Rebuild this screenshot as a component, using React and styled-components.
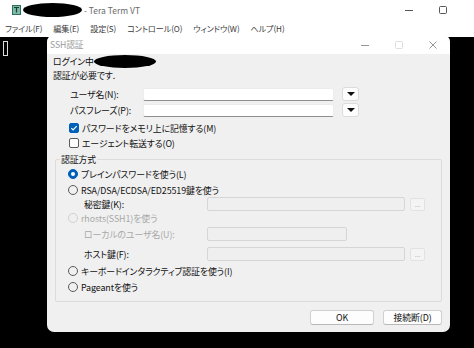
import React from 'react';
import styled, { createGlobalStyle } from 'styled-components';

const GlobalStyle = createGlobalStyle`
  html, body {
    margin: 0;
    padding: 0;
    background: #000;
  }
  body {
    font-family: "Noto Sans CJK JP", "Noto Sans", sans-serif;
    font-feature-settings: "palt";
  }
`;

// ---- main Tera Term window ----
const Window = styled.div`
  position: relative;
  width: 474px;
  height: 348px;
  overflow: hidden;
  display: flex;
  flex-direction: column;
  background: #000;
`;

const TitleBar = styled.div`
  height: 20px;
  background: #fff;
  display: flex;
  align-items: center;
  padding-left: 12px;
  font-size: 8.5px;
  color: #6a6a6a;
`;

const Redact = styled.span`
  display: inline-block;
  width: ${(p) => p.w}px;
  height: ${(p) => p.h}px;
  margin-left: ${(p) => p.ml || 0}px;
  background: #000;
  border-radius: 50%;
`;

const TitleText = styled.span`
  margin-left: 2px;
  white-space: nowrap;
`;

const WinControls = styled.div`
  margin-left: auto;
  display: flex;
  align-items: center;
  gap: 26px;
  padding-right: 27px;
  color: #333;
`;

const MenuBar = styled.div`
  height: 17px;
  background: #fff;
  display: flex;
  align-items: center;
  gap: 11px;
  padding-left: 5px;
  font-size: 8.1px;
  letter-spacing: -0.1px;
  color: #3a3a3a;
`;

const MenuItem = styled.span`
  white-space: nowrap;
`;

const Terminal = styled.div`
  flex: 1;
  background: #000;
  padding: 4px 0 0 3px;
`;

const Cursor = styled.div`
  width: 3px;
  height: 13px;
  border: 1px solid #ddd;
`;

// ---- SSH dialog ----
const Dialog = styled.div`
  position: absolute;
  left: 47px;
  top: 35px;
  width: 403px;
  height: 297px;
  border-radius: 7px;
  overflow: hidden;
  background: #f0f0f0;
  display: flex;
  flex-direction: column;
  font-size: 8.9px;
  letter-spacing: -0.1px;
  color: #111;
`;

const DlgTitle = styled.div`
  height: 19px;
  background: #fff;
  display: flex;
  align-items: center;
  padding-left: 3px;
  color: #9a9a9a;
  font-size: 8.7px;
`;

const DlgControls = styled.div`
  margin-left: auto;
  display: flex;
  align-items: center;
  gap: 26px;
  padding-right: 13px;
`;

const DlgBody = styled.div`
  flex: 1;
  display: flex;
  flex-direction: column;
  padding: 0 8px 7px 6px;
`;

const Line = styled.div`
  height: ${(p) => p.h || 14}px;
  margin-top: ${(p) => p.mt || 0}px;
  margin-left: ${(p) => p.ml || 0}px;
  display: flex;
  align-items: center;
  white-space: nowrap;
  color: ${(p) => (p.disabled ? '#a8a8a8' : 'inherit')};
`;

const Label = styled.span`
  width: ${(p) => p.w}px;
  flex: none;
`;

const Input = styled.div`
  width: ${(p) => p.w}px;
  height: ${(p) => p.h || 12}px;
  box-sizing: border-box;
  flex: none;
  border-radius: 2px;
  background: ${(p) => (p.disabled ? '#efefef' : '#fff')};
  border: 1px solid ${(p) => (p.disabled ? '#d6d6d6' : '#ececec')};
  border-bottom-color: ${(p) => (p.disabled ? '#d6d6d6' : '#8f8f8f')};
`;

const DropBtn = styled.div`
  width: 17px;
  height: 14px;
  margin-left: 8px;
  box-sizing: border-box;
  border: 1px solid #dcdcdc;
  border-radius: 3px;
  background: #fdfdfd;
  display: flex;
  align-items: center;
  justify-content: center;
`;

const Tri = styled.span`
  width: 0;
  height: 0;
  border-left: 4px solid transparent;
  border-right: 4px solid transparent;
  border-top: 4px solid #111;
`;

const DotsBtn = styled.div`
  width: 15px;
  height: 13px;
  margin-left: 5px;
  box-sizing: border-box;
  border: 1px solid #e2e2e2;
  border-radius: 2px;
  background: #f4f4f4;
  color: #b8b8b8;
  font-size: 7px;
  line-height: 10px;
  text-align: center;
`;

const Check = styled.span`
  width: 10px;
  height: 10px;
  box-sizing: border-box;
  border-radius: 2px;
  margin-right: 3px;
  flex: none;
  display: flex;
  align-items: center;
  justify-content: center;
  background: ${(p) => (p.on ? '#005fb8' : '#fff')};
  border: 1px solid ${(p) => (p.on ? '#005fb8' : '#5a5a5a')};
`;

const Radio = styled.span`
  width: 10px;
  height: 10px;
  box-sizing: border-box;
  border-radius: 50%;
  margin-right: 3px;
  flex: none;
  display: flex;
  align-items: center;
  justify-content: center;
  background: ${(p) => (p.on ? '#005fb8' : 'transparent')};
  border: 1px solid
    ${(p) => (p.on ? '#005fb8' : p.disabled ? '#d0d0d0' : '#5a5a5a')};

  &::after {
    content: '';
    display: ${(p) => (p.on ? 'block' : 'none')};
    width: 4px;
    height: 4px;
    border-radius: 50%;
    background: #fff;
  }
`;

const Group = styled.div`
  margin: 9px 0 0 2px;
  border: 1px solid #dcdcdc;
  border-radius: 2px;
  padding: 0 0 7px 0;
  display: flex;
  flex-direction: column;
`;

const Legend = styled.div`
  margin: -7px 0 0 4px;
  height: 13px;
  line-height: 13px;
  padding: 0 1px;
  width: fit-content;
  background: #f0f0f0;
`;

const Buttons = styled.div`
  margin-top: 8px;
  display: flex;
  justify-content: flex-end;
  gap: 9px;
`;

const Button = styled.div`
  width: ${(p) => p.w}px;
  height: 15px;
  box-sizing: border-box;
  border: 1px solid #d0d0d0;
  border-bottom-color: #b8b8b8;
  border-radius: 3px;
  background: #fdfdfd;
  display: flex;
  align-items: center;
  justify-content: center;
  color: #111;
`;

const TeraIcon = () => (
  <svg width="9" height="10" viewBox="0 0 9 10">
    <rect x="0.5" y="0.5" width="8" height="9" fill="#7fb9a8" stroke="#2f6f5e" />
    <path d="M2 2.5h5M4.5 2.5v5" stroke="#1c3f35" strokeWidth="1.2" />
  </svg>
);

const CheckMark = () => (
  <svg width="8" height="8" viewBox="0 0 8 8">
    <path d="M1.3 4.2l1.8 1.8 3.6-3.8" fill="none" stroke="#fff" strokeWidth="1.2" />
  </svg>
);

const MinIcon = ({ color }) => (
  <svg width="8" height="8" viewBox="0 0 8 8">
    <path d="M0 4.5h8" stroke={color} strokeWidth="0.9" />
  </svg>
);

const MaxIcon = ({ color }) => (
  <svg width="8" height="8" viewBox="0 0 8 8">
    <rect x="0.5" y="0.5" width="7" height="7" rx="1" fill="none" stroke={color} strokeWidth="0.9" />
  </svg>
);

const CloseIcon = ({ color }) => (
  <svg width="8" height="8" viewBox="0 0 8 8">
    <path d="M0.5 0.5l7 7M7.5 0.5l-7 7" stroke={color} strokeWidth="0.9" />
  </svg>
);

const menus = [
  'ファイル(F)',
  '編集(E)',
  '設定(S)',
  'コントロール(O)',
  'ウィンドウ(W)',
  'ヘルプ(H)',
];

export default function App() {
  return (
    <>
      <GlobalStyle />
      <Window>
        <TitleBar>
          <TeraIcon />
          <Redact w={59} h={14} ml={2} />
          <TitleText>- Tera Term VT</TitleText>
          <WinControls>
            <MinIcon color="#444" />
            <MaxIcon color="#444" />
          </WinControls>
        </TitleBar>

        <MenuBar>
          {menus.map((m) => (
            <MenuItem key={m}>{m}</MenuItem>
          ))}
        </MenuBar>

        <Terminal>
          <Cursor />
        </Terminal>

        <Dialog>
          <DlgTitle>
            SSH認証
            <DlgControls>
              <MinIcon color="#8a8a8a" />
              <MaxIcon color="#dadada" />
              <CloseIcon color="#8a8a8a" />
            </DlgControls>
          </DlgTitle>

          <DlgBody>
            <Line h={14}>
              ログイン中
              <Redact w={62} h={13} />
            </Line>
            <Line h={15}>認証が必要です.</Line>

            <Line mt={4} ml={17}>
              <Label w={73}>ユーザ名(N):</Label>
              <Input w={191} h={13} />
              <DropBtn>
                <Tri />
              </DropBtn>
            </Line>
            <Line mt={2} ml={17}>
              <Label w={73}>パスフレーズ(P):</Label>
              <Input w={191} h={13} />
              <DropBtn>
                <Tri />
              </DropBtn>
            </Line>

            <Line mt={4} ml={16}>
              <Check on>
                <CheckMark />
              </Check>
              パスワードをメモリ上に記憶する(M)
            </Line>
            <Line mt={1} ml={16}>
              <Check />
              エージェント転送する(O)
            </Line>

            <Group>
              <Legend>認証方式</Legend>
              <Line mt={1} ml={12}>
                <Radio on />
                プレインパスワードを使う(L)
              </Line>
              <Line mt={2} ml={12}>
                <Radio />
                RSA/DSA/ECDSA/ED25519鍵を使う
              </Line>
              <Line ml={28}>
                <Label w={123}>秘密鍵(K):</Label>
                <Input w={198} h={14} disabled />
                <DotsBtn>...</DotsBtn>
              </Line>
              <Line ml={12} disabled>
                <Radio disabled />
                rhosts(SSH1)を使う
              </Line>
              <Line mt={2} ml={28} disabled>
                <Label w={123}>ローカルのユーザ名(U):</Label>
                <Input w={140} h={14} disabled />
              </Line>
              <Line mt={6} ml={28}>
                <Label w={123}>ホスト鍵(F):</Label>
                <Input w={198} h={14} disabled />
                <DotsBtn>...</DotsBtn>
              </Line>
              <Line mt={3} ml={12}>
                <Radio />
                キーボードインタラクティブ認証を使う(I)
              </Line>
              <Line mt={2} ml={12}>
                <Radio />
                Pageantを使う
              </Line>
            </Group>

            <Buttons>
              <Button w={64}>OK</Button>
              <Button w={59}>接続断(D)</Button>
            </Buttons>
          </DlgBody>
        </Dialog>
      </Window>
    </>
  );
}
